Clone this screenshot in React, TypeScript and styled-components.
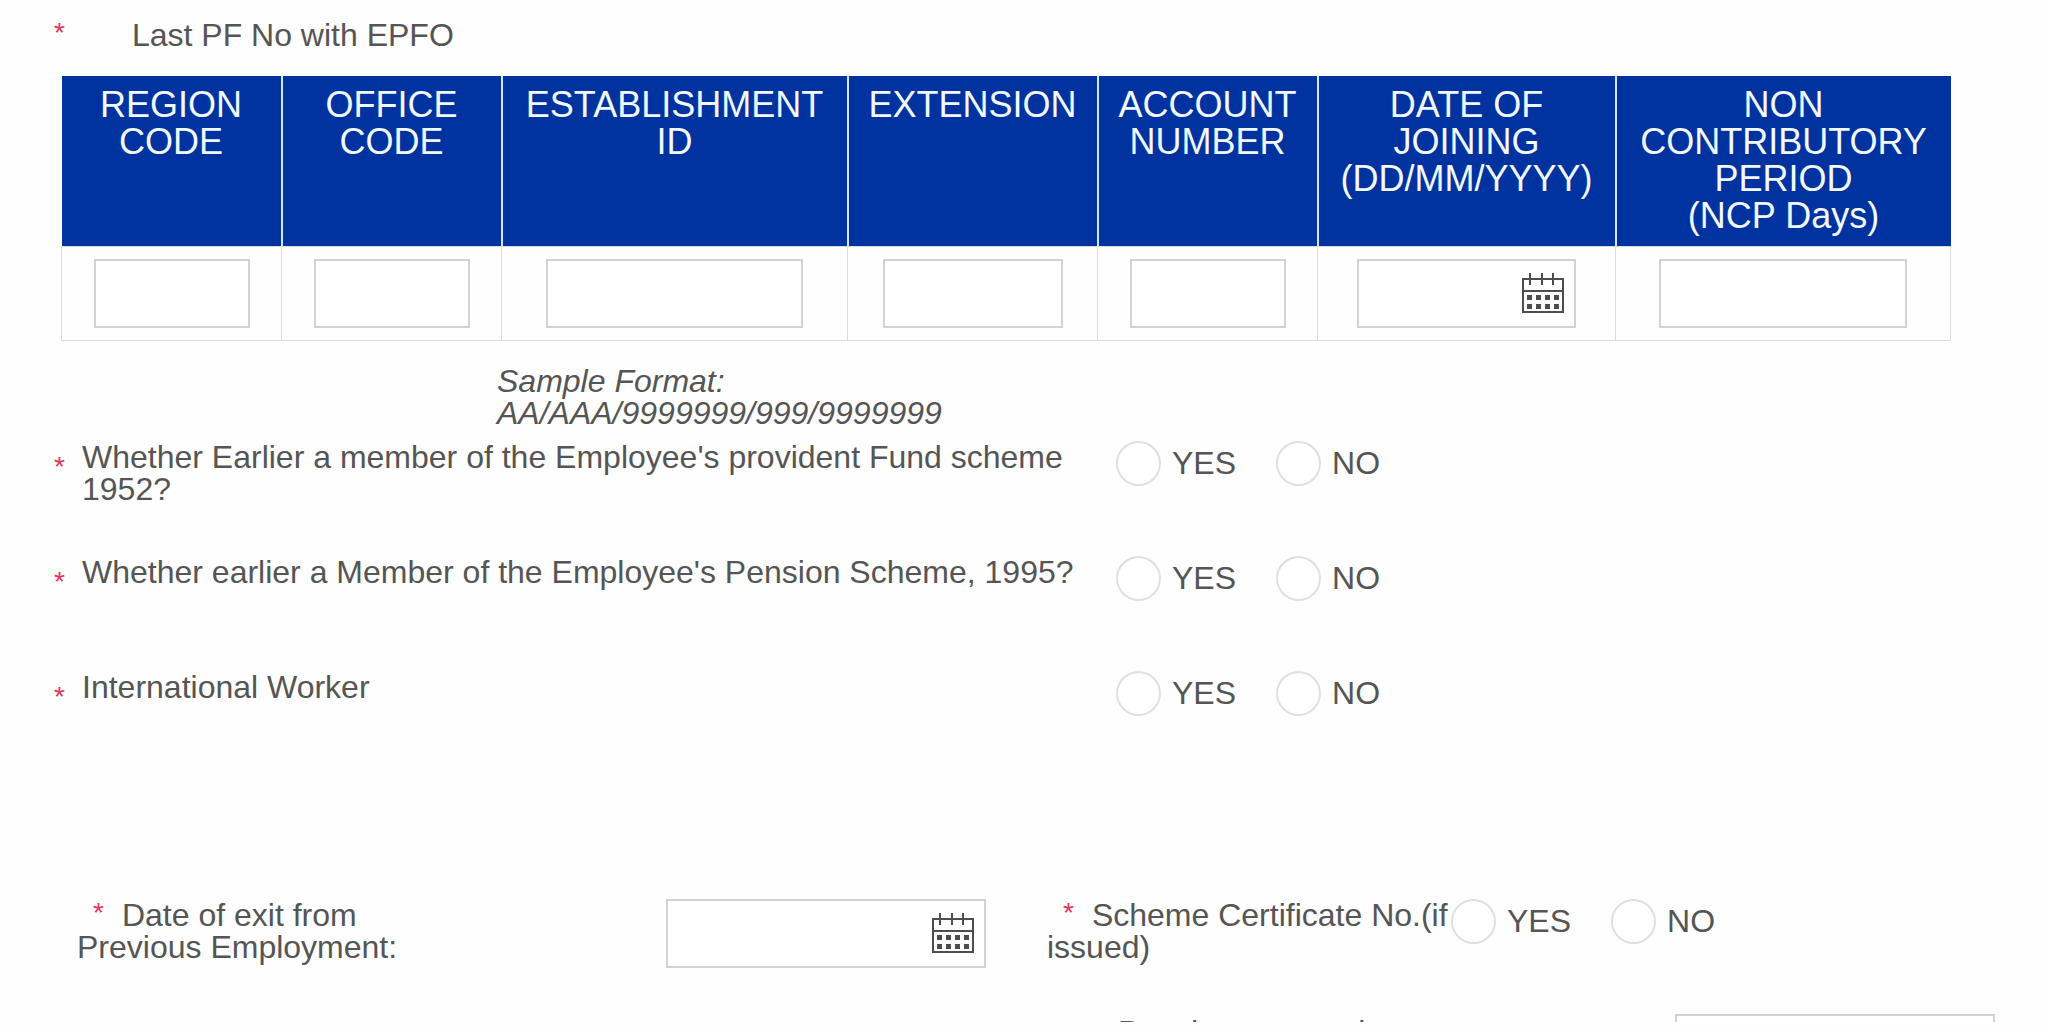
import React from "react";
import styled, { createGlobalStyle } from "styled-components";

const GlobalStyle = createGlobalStyle`
  *, *::before, *::after { box-sizing: border-box; }
  body {
    margin: 0;
    background: #fefefe;
    color: #555;
    font-family: "Liberation Sans", Arial, sans-serif;
    font-size: 32px;
    line-height: 32px;
  }
`;

const Page = styled.form`
  padding: 19px 97px 0 54px;
`;

const Star = styled.span`
  color: #e2355c;
  font-size: 28px;
  line-height: 28px;
  vertical-align: top;
`;

const Title = styled.div`
  display: flex;
  align-items: flex-start;
  gap: 67px;
  margin-bottom: 25px;
`;

const PfTable = styled.table`
  width: calc(100% - 7px);
  margin-left: 7px;
  table-layout: fixed;
  border-collapse: collapse;
`;

const HeadCell = styled.th`
  height: 170px;
  padding: 10px 12px;
  background: #0033a0;
  color: #f2f9ff;
  font-size: 36px;
  font-weight: 400;
  line-height: 37px;
  text-align: center;
  vertical-align: top;
  & + & {
    border-left: 2px solid #d3e6fa;
  }
`;

const BodyCell = styled.td`
  padding: 12px;
  border: 1px solid #dcdcdc;
`;

const Field = styled.div<{ $width: string }>`
  display: flex;
  align-items: center;
  width: ${(p) => p.$width};
  height: 69px;
  border: 2px solid #d2d2d2;
  background: #fff;
  ${BodyCell} & {
    margin: 0 auto;
  }
`;

const TextInput = styled.input`
  flex: 1;
  min-width: 0;
  height: 100%;
  padding: 0 12px;
  border: 0;
  outline: 0;
  background: transparent;
  color: inherit;
  font: inherit;
`;

const IconButton = styled.button`
  flex: none;
  display: flex;
  margin-right: 10px;
  padding: 0;
  border: 0;
  background: none;
  cursor: pointer;
`;

const Sample = styled.p`
  margin: 24px 0 12px 443px;
  font-style: italic;
`;

const Question = styled.div`
  display: grid;
  grid-template-columns: 28px minmax(0, 1034fr) minmax(0, 835fr);
  align-items: start;
  min-height: 115px;
  & > ${Star} {
    padding-top: 12px;
  }
`;

const Options = styled.div`
  display: flex;
  gap: 40px;
`;

const Option = styled.label`
  display: flex;
  align-items: center;
  gap: 11px;
`;

const Radio = styled.input`
  appearance: none;
  width: 45px;
  height: 45px;
  margin: 0;
  border: 2px solid #e0e0e0;
  border-radius: 50%;
  background: #fff;
  &:checked {
    background: radial-gradient(#555 40%, #fff 42%);
  }
`;

const ExitRow = styled.div`
  display: grid;
  grid-template-columns: minmax(0, 589fr) minmax(0, 381fr) minmax(0, 404fr) minmax(0, 500fr);
  align-items: start;
  min-height: 115px;
  margin: 113px 0 0 23px;
`;

const ExitLabel = styled.label`
  white-space: nowrap;
  ${Star} {
    margin-right: 18px;
  }
`;

const ExitLine = styled.span`
  display: block;
  &:first-child {
    padding-left: 16px;
  }
`;

const CutRow = styled.div`
  display: flex;
  justify-content: space-between;
  align-items: flex-start;
  height: 8px;
  margin: 0 -44px 0 1064px;
  overflow: hidden;
`;

const CutLabel = styled.label`
  padding-top: 2px;
  white-space: nowrap;
`;

function CalendarIcon() {
  const xs = [7, 16, 25, 34];
  return (
    <svg width="42" height="40" viewBox="0 0 42 40" fill="none" stroke="#4d4d4d" strokeWidth="2" aria-hidden="true">
      <path d="M1 6H41V39H1Z M1 18H41" />
      <path d="M8 0V12 M20 0V12 M31 0V12" />
      {xs.map((x) => (
        <g key={x} fill="#4d4d4d" stroke="none">
          <rect x={x - 2} y="22" width="5" height="5" />
          <rect x={x - 2} y="31" width="5" height="5" />
        </g>
      ))}
    </svg>
  );
}

function Box({ id, label, width, date }: { id: string; label?: string; width: string; date?: boolean }) {
  return (
    <Field $width={width}>
      <TextInput id={id} type="text" aria-label={label} />
      {date && (
        <IconButton type="button" aria-label="Open calendar">
          <CalendarIcon />
        </IconButton>
      )}
    </Field>
  );
}

function YesNo({ name, label }: { name: string; label: string }) {
  return (
    <Options role="radiogroup" aria-label={label}>
      {["YES", "NO"].map((v) => (
        <Option key={v}>
          <Radio type="radio" name={name} value={v} />
          {v}
        </Option>
      ))}
    </Options>
  );
}

const columns: { id: string; width: number; lines: string[]; date?: boolean }[] = [
  { id: "region", width: 220, lines: ["REGION CODE"] },
  { id: "office", width: 220, lines: ["OFFICE CODE"] },
  { id: "establishment", width: 346, lines: ["ESTABLISHMENT ID"] },
  { id: "extension", width: 250, lines: ["EXTENSION"] },
  { id: "account", width: 220, lines: ["ACCOUNT NUMBER"] },
  { id: "joining", width: 298, lines: ["DATE OF", "JOINING", "(DD/MM/YYYY)"], date: true },
  { id: "ncp", width: 335, lines: ["NON", "CONTRIBUTORY", "PERIOD", "(NCP Days)"] },
];

const questions = [
  { name: "epf", text: "Whether Earlier a member of the Employee's provident Fund scheme 1952?" },
  { name: "eps", text: "Whether earlier a Member of the Employee's Pension Scheme, 1995?" },
  { name: "international", text: "International Worker" },
];

export default function App() {
  return (
    <>
      <GlobalStyle />
      <Page>
        <Title>
          <Star>*</Star>
          <span>Last PF No with EPFO</span>
        </Title>
        <PfTable>
          <colgroup>
            {columns.map((c) => (
              <col key={c.id} width={c.width} />
            ))}
          </colgroup>
          <thead>
            <tr>
              {columns.map((c) => (
                <HeadCell key={c.id} scope="col">
                  {c.lines.map((line, i) => (
                    <React.Fragment key={line}>
                      {i > 0 && <br />}
                      {line}
                    </React.Fragment>
                  ))}
                </HeadCell>
              ))}
            </tr>
          </thead>
          <tbody>
            <tr>
              {columns.map((c) => (
                <BodyCell key={c.id}>
                  <Box id={c.id} label={c.lines.join(" ")} width="80%" date={c.date} />
                </BodyCell>
              ))}
            </tr>
          </tbody>
        </PfTable>
        <Sample>
          Sample Format:
          <br />
          AA/AAA/9999999/999/9999999
        </Sample>
        {questions.map((q) => (
          <Question key={q.name}>
            <Star>*</Star>
            <span>{q.text}</span>
            <YesNo name={q.name} label={q.text} />
          </Question>
        ))}
        <ExitRow>
          <ExitLabel htmlFor="exit">
            <ExitLine>
              <Star>*</Star>Date of exit from
            </ExitLine>
            <ExitLine>Previous Employment:</ExitLine>
          </ExitLabel>
          <Box id="exit" width="320px" date />
          <ExitLabel as="div">
            <ExitLine>
              <Star>*</Star>Scheme Certificate No.(if
            </ExitLine>
            <ExitLine>issued)</ExitLine>
          </ExitLabel>
          <YesNo name="certificate" label="Scheme Certificate No." />
        </ExitRow>
        <CutRow>
          <CutLabel htmlFor="pension">Pension amount in</CutLabel>
          <Box id="pension" width="320px" />
        </CutRow>
      </Page>
    </>
  );
}
